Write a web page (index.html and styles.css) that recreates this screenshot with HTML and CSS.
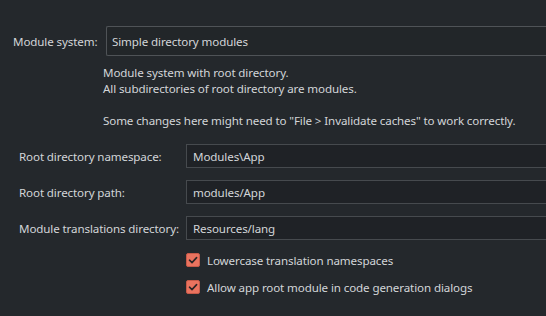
FILE: index.html
```html
<!DOCTYPE html>
<html>
<head>
<meta charset="utf-8">
<link rel="stylesheet" href="styles.css">
</head>
<body>
<div class="page">
  <div class="system-row">
    <span class="system-label">Module system:</span>
    <div class="combo">Simple directory modules</div>
  </div>
  <div class="desc">
    <div>Module system with root directory.</div>
    <div>All subdirectories of root directory are modules.</div>
    <div class="blank"></div>
    <div>Some changes here might need to "File &gt; Invalidate caches" to work correctly.</div>
  </div>
  <div class="form">
    <span class="label">Root directory namespace:</span>
    <div class="field">Modules\App</div>
    <span class="label">Root directory path:</span>
    <div class="field">modules/App</div>
    <span class="label">Module translations directory:</span>
    <div class="field">Resources/lang</div>
  </div>
  <div class="checks">
    <div class="check-row"><span class="box"><svg viewBox="0 0 14 14" width="14" height="14"><path d="M3.5 7.2 L6 9.6 L10.6 4.6" fill="none" stroke="#2a2526" stroke-width="1.6" stroke-linecap="round" stroke-linejoin="round"/></svg></span><span>Lowercase translation namespaces</span></div>
    <div class="check-row"><span class="box"><svg viewBox="0 0 14 14" width="14" height="14"><path d="M3.5 7.2 L6 9.6 L10.6 4.6" fill="none" stroke="#2a2526" stroke-width="1.6" stroke-linecap="round" stroke-linejoin="round"/></svg></span><span>Allow app root module in code generation dialogs</span></div>
  </div>
</div>
</body>
</html>
```
FILE: styles.css
```css
html, body {
  margin: 0;
  padding: 0;
  background: #24282c;
  overflow: hidden;
}
body {
  width: 546px;
  height: 316px;
  font-family: "Noto Sans", "Open Sans", sans-serif;
  font-size: 11.6px;
  letter-spacing: -0.12px;
  color: #d2d5d8;
  white-space: nowrap;
}
.page {
  padding-top: 26px;
}
.system-row {
  display: flex;
  align-items: center;
  height: 30px;
}
.system-label {
  width: 106px;
  padding-left: 13px;
  box-sizing: border-box;
  flex: none;
}
.combo {
  flex: none;
  width: 440px;
  height: 30px;
  box-sizing: border-box;
  border: 1px solid #4f5357;
  border-right: none;
  border-radius: 2px 0 0 2px;
  background: #222629;
  padding-left: 5px;
  display: flex;
  align-items: center;
}
.desc {
  margin-top: 9px;
  margin-left: 103px;
  line-height: 16px;
}
.desc .blank {
  height: 16px;
}
.form {
  margin-top: 15px;
  display: grid;
  grid-template-columns: 167px 360px;
  row-gap: 12px;
  padding-left: 19px;
}
.label {
  display: flex;
  align-items: center;
  height: 24px;
}
.field {
  height: 24px;
  box-sizing: border-box;
  border: 1px solid #464a4e;
  border-right: none;
  background: #1f2226;
  padding-left: 6px;
  display: flex;
  align-items: center;
}
.checks {
  margin-top: 10px;
  padding-left: 186px;
  display: flex;
  flex-direction: column;
  gap: 7px;
}
.check-row {
  display: flex;
  align-items: center;
  height: 20px;
  gap: 7px;
}
.box {
  width: 14px;
  height: 14px;
  box-sizing: border-box;
  background: #ea735f;
  border: 1px solid #c65a49;
  border-radius: 2px;
  display: flex;
  align-items: center;
  justify-content: center;
}
.box svg {
  flex: none;
}
```
